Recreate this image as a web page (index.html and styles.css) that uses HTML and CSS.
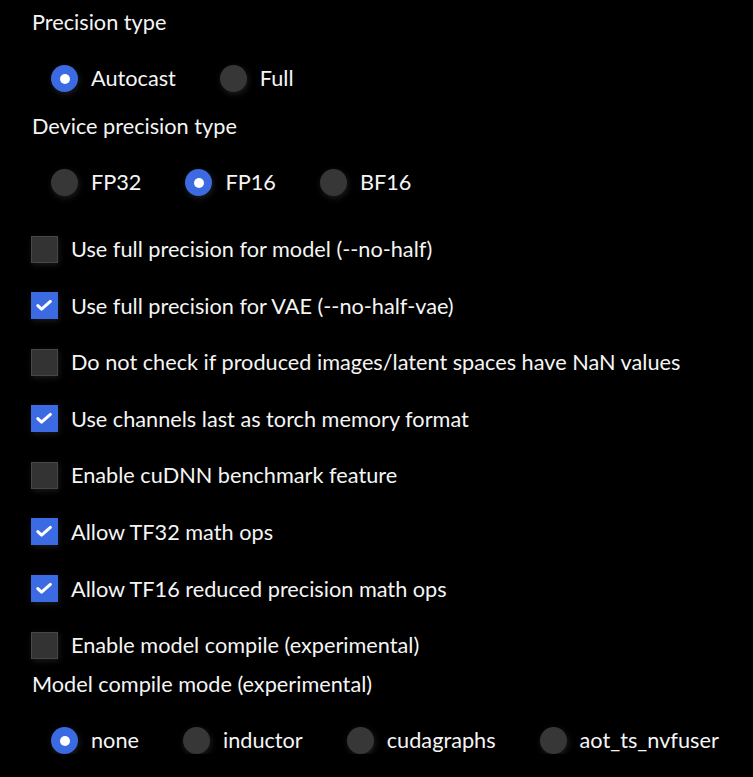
FILE: index.html
```html
<!DOCTYPE html>
<html lang="en">
<head>
<meta charset="utf-8">
<title>Precision settings</title>
<link rel="stylesheet" href="styles.css">
</head>
<body>
<div class="panel">
  <div class="field-label">Precision type</div>
  <div class="radio-group g1">
    <label class="radio-item"><span class="radio checked"></span><span>Autocast</span></label>
    <label class="radio-item"><span class="radio"></span><span>Full</span></label>
  </div>

  <div class="field-label l2">Device precision type</div>
  <div class="radio-group g2">
    <label class="radio-item"><span class="radio"></span><span>FP32</span></label>
    <label class="radio-item"><span class="radio checked"></span><span>FP16</span></label>
    <label class="radio-item"><span class="radio"></span><span>BF16</span></label>
  </div>

  <div class="checks">
    <label class="check-item"><span class="checkbox"></span><span>Use full precision for model (--no-half)</span></label>
    <label class="check-item"><span class="checkbox checked"><svg viewBox="0 0 27 27" width="27" height="27"><path d="M6.8 13.6 L10.6 17.2 L19.4 9.4" fill="none" stroke="#fff" stroke-width="3" stroke-linecap="round" stroke-linejoin="round"/></svg></span><span>Use full precision for VAE (--no-half-vae)</span></label>
    <label class="check-item"><span class="checkbox"></span><span>Do not check if produced images/latent spaces have NaN values</span></label>
    <label class="check-item"><span class="checkbox checked"><svg viewBox="0 0 27 27" width="27" height="27"><path d="M6.8 13.6 L10.6 17.2 L19.4 9.4" fill="none" stroke="#fff" stroke-width="3" stroke-linecap="round" stroke-linejoin="round"/></svg></span><span>Use channels last as torch memory format</span></label>
    <label class="check-item"><span class="checkbox"></span><span>Enable cuDNN benchmark feature</span></label>
    <label class="check-item"><span class="checkbox checked"><svg viewBox="0 0 27 27" width="27" height="27"><path d="M6.8 13.6 L10.6 17.2 L19.4 9.4" fill="none" stroke="#fff" stroke-width="3" stroke-linecap="round" stroke-linejoin="round"/></svg></span><span>Allow TF32 math ops</span></label>
    <label class="check-item"><span class="checkbox checked"><svg viewBox="0 0 27 27" width="27" height="27"><path d="M6.8 13.6 L10.6 17.2 L19.4 9.4" fill="none" stroke="#fff" stroke-width="3" stroke-linecap="round" stroke-linejoin="round"/></svg></span><span>Allow TF16 reduced precision math ops</span></label>
    <label class="check-item"><span class="checkbox"></span><span>Enable model compile (experimental)</span></label>
  </div>

  <div class="field-label l3">Model compile mode (experimental)</div>
  <div class="radio-group g3">
    <label class="radio-item"><span class="radio checked"></span><span>none</span></label>
    <label class="radio-item"><span class="radio"></span><span>inductor</span></label>
    <label class="radio-item"><span class="radio"></span><span>cudagraphs</span></label>
    <label class="radio-item"><span class="radio"></span><span>aot_ts_nvfuser</span></label>
  </div>
</div>
</body>
</html>
```

FILE: styles.css
```css
html, body {
  margin: 0;
  padding: 0;
  background: #000;
}
body {
  font-family: Lato, "Noto Sans", sans-serif;
  font-size: 21.7px;
  color: #f5f5f5;
}
.panel {
  padding: 8px 0 0 32px;
  display: flex;
  flex-direction: column;
}
.field-label {
  line-height: 28px;
  height: 28px;
}
.l2 { margin-top: 20px; }
.l3 { margin-top: 11px; }
.radio-group {
  display: flex;
  align-items: center;
  gap: 44px;
  padding-left: 19px;
  height: 27px;
}
.g1, .g2, .g3 { margin-top: 29px; }
.radio-item {
  display: flex;
  align-items: center;
  gap: 13px;
  line-height: 27px;
}
.radio {
  width: 27px;
  height: 27px;
  border-radius: 50%;
  background: #373737;
  box-shadow: 1px 2px 6px rgba(70, 70, 70, 0.45);
  flex: none;
  display: flex;
  align-items: center;
  justify-content: center;
}
.radio.checked {
  background: #3c6ae3;
}
.radio.checked::after {
  content: "";
  width: 10px;
  height: 10px;
  border-radius: 50%;
  background: #fff;
}
.checks {
  margin-top: 39px;
  margin-left: -1px;
  display: flex;
  flex-direction: column;
  gap: 28.6px;
}
.check-item {
  display: flex;
  align-items: center;
  gap: 13px;
  height: 28px;
  line-height: 28px;
}
.checkbox {
  width: 27px;
  height: 27px;
  background: #333333;
  box-shadow: inset 0 0 0 1px #474747, 1px 2px 6px rgba(60, 60, 60, 0.45);
  flex: none;
  display: flex;
}
.checkbox.checked {
  background: #3c6ae3;
  box-shadow: 1px 2px 6px rgba(60, 60, 60, 0.45);
}
```
